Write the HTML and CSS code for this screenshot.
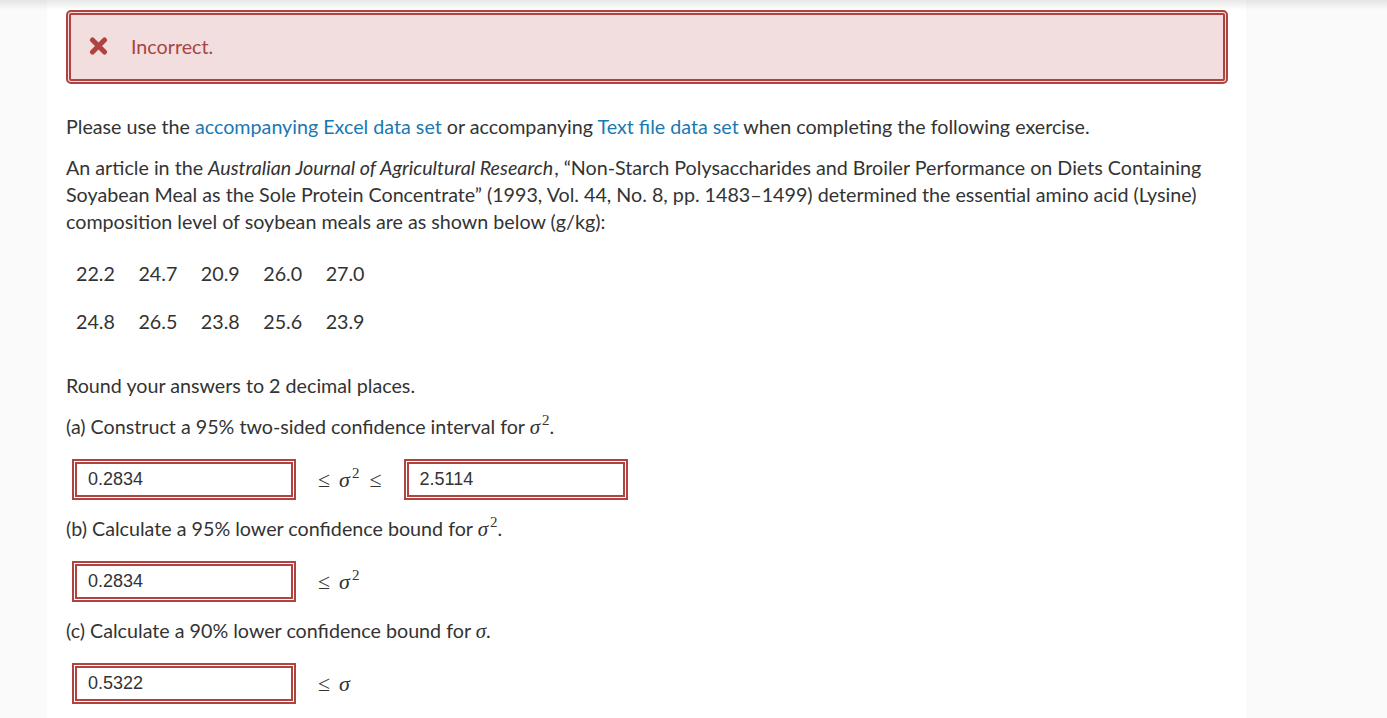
FILE: index.html
```html
<!DOCTYPE html>
<html>
<head>
<meta charset="utf-8">
<link rel="stylesheet" href="styles.css">
</head>
<body>
<div class="topshade"></div>
<div class="page">
  <main class="content">
    <div class="alert">
      <svg class="alert-icon" width="19" height="18" viewBox="0 0 19 18" aria-hidden="true">
        <path d="M3.5 3 L15.5 15 M15.5 3 L3.5 15" stroke="#b0423f" stroke-width="5" stroke-linecap="round" fill="none"/>
      </svg>
      <span class="alert-text">Incorrect.</span>
    </div>

    <p class="para first">Please use the <a class="link" href="#">accompanying Excel data set</a> or accompanying <a class="link" href="#">Text file data set</a> when completing the following exercise.</p>
    <p class="para">An article in the <em class="title">Australian Journal of Agricultural Research</em>, “Non-Starch Polysaccharides and Broiler Performance on Diets Containing Soyabean Meal as the Sole Protein Concentrate” (1993, Vol. 44, No. 8, pp. 1483–1499) determined the essential amino acid (Lysine) composition level of soybean meals are as shown below (g/kg):</p>

    <table class="data">
      <tr><td>22.2</td><td>24.7</td><td>20.9</td><td>26.0</td><td>27.0</td></tr>
      <tr><td>24.8</td><td>26.5</td><td>23.8</td><td>25.6</td><td>23.9</td></tr>
    </table>

    <p class="para round">Round your answers to 2 decimal places.</p>
    <p class="para q">(a) Construct a 95% two-sided confidence interval for <span class="math inl"><i>σ</i><sup>2</sup></span>.</p>
    <div class="answer-row">
      <div class="answer">0.2834</div>
      <span class="math rel"><span class="op">≤</span><i class="var">σ</i><sup>2</sup><span class="op op2">≤</span></span>
      <div class="answer">2.5114</div>
    </div>

    <p class="para q">(b) Calculate a 95% lower confidence bound for <span class="math inl"><i>σ</i><sup>2</sup></span>.</p>
    <div class="answer-row">
      <div class="answer">0.2834</div>
      <span class="math rel"><span class="op">≤</span><i class="var">σ</i><sup>2</sup></span>
    </div>

    <p class="para q">(c) Calculate a 90% lower confidence bound for <span class="math inl"><i>σ</i></span>.</p>
    <div class="answer-row">
      <div class="answer">0.5322</div>
      <span class="math rel"><span class="op">≤</span><i class="var">σ</i></span>
    </div>
  </main>
</div>
</body>
</html>
```

FILE: styles.css
```css
html, body {
  margin: 0;
  padding: 0;
}
body {
  background: #fafafa;
  font-family: Lato, "Noto Sans", sans-serif;
  color: #333333;
  height: 718px;
  overflow: hidden;
  position: relative;
}
.topshade {
  position: absolute;
  left: 0;
  right: 0;
  top: 0;
  height: 10px;
  background: linear-gradient(to bottom, rgba(0,0,0,0.09), rgba(0,0,0,0));
  pointer-events: none;
  z-index: 2;
}
.page {
  padding-left: 47px;
}
.content {
  width: 1199px;
  box-sizing: border-box;
  background: #ffffff;
  padding: 10px 18px 20px 19px;
  min-height: 718px;
}
.alert {
  box-sizing: border-box;
  height: 74px;
  border: 5px double #b0423f;
  border-radius: 5px;
  background: #f2dede;
  display: flex;
  align-items: center;
  padding-left: 18px;
  padding-bottom: 2px;
}
.alert-icon {
  display: block;
  flex: none;
}
.alert-text {
  margin-left: 23px;
  font-size: 19.7px;
  color: #a94442;
}
.para {
  font-size: 19.7px;
  line-height: 27px;
  margin: 0 0 14px 0;
}
.para.first {
  margin-top: 29px;
}
.title {
  padding-right: 1px;
}
.link {
  color: #1a78b3;
  text-decoration: none;
}
.data {
  border-collapse: collapse;
  font-size: 19.7px;
  margin-top: 15px;
}
.data td {
  padding: 10px 13.5px 11px 10px;
  line-height: 27px;
}
.para.round {
  margin-top: 26px;
}
.answer-row {
  display: flex;
  align-items: center;
  margin: 18px 0 15px 6px;
}
.answer {
  box-sizing: border-box;
  width: 224px;
  height: 41px;
  border: 5px double #b0423f;
  background: #fff;
  font-family: "Liberation Sans", Arial, sans-serif;
  font-size: 18px;
  color: #333;
  padding-left: 11px;
  display: flex;
  align-items: center;
}
.math {
  font-family: "Liberation Serif", "Times New Roman", serif;
  font-size: 21px;
}
.math i {
  font-style: italic;
}
.math sup {
  font-size: 15px;
  vertical-align: 9px;
  line-height: 0;
  margin-left: 2px;
}
.rel {
  display: block;
  margin: 0 22px 0 22px;
  color: #333;
  white-space: nowrap;
  line-height: 27px;
  font-size: 22px;
}
.rel .var {
  margin-left: 9px;
}
.rel .op2 {
  margin-left: 10px;
}
```
